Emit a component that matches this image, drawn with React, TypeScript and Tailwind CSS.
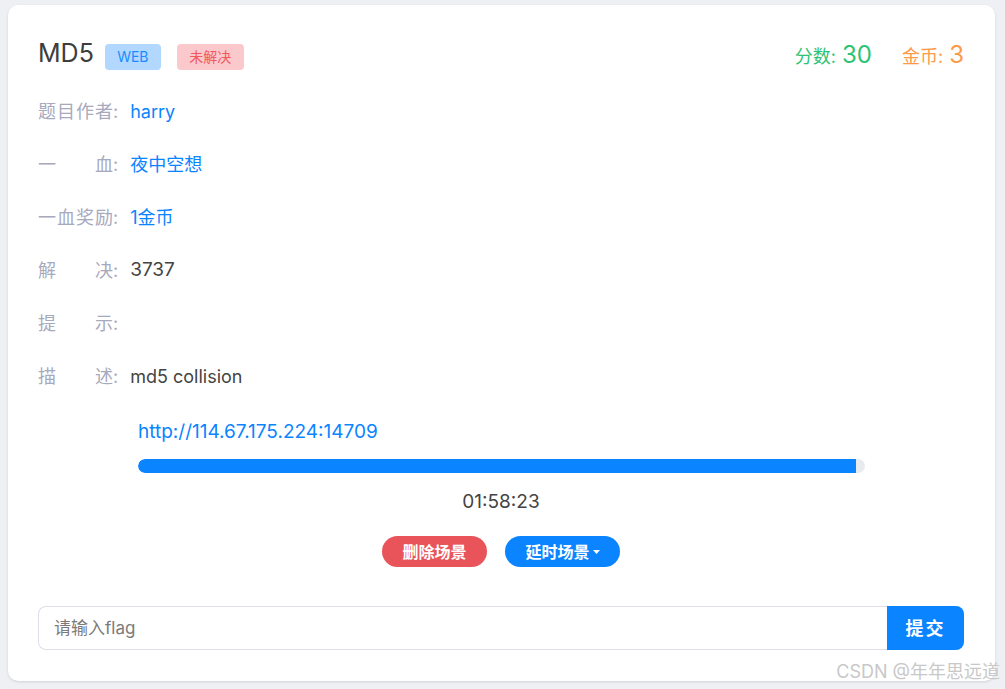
const font = { fontFamily: 'Inter, "Noto Sans CJK SC", sans-serif' };

function Row({ label, children }: { label: string; children?: React.ReactNode }) {
    return (
        <div className="flex h-[53px] items-center text-[18px]">
            <span className="flex text-[#a7a9bd]">
                <span className="w-[75px] text-justify [text-align-last:justify]">{label}</span>
                <span>:</span>
            </span>
            <span className="ml-[12px]">{children}</span>
        </div>
    );
}

export default function App() {
    return (
        <div className="min-h-[689px] bg-[#eef0f3] pl-[8px] pr-[10px] pt-[5px] pb-[8px]" style={font}>
            <div className="relative rounded-[10px] bg-white pl-[30px] pr-[31px] pt-[30px] pb-[31px] shadow-sm">
                {/* Header */}
                <div className="flex h-[36px] items-center justify-between">
                    <div className="flex items-center">
                        <h1 className="text-[25px] leading-none text-[#3d3d3d]">MD5</h1>
                        <span className="ml-[11px] mt-[7px] flex h-[26px] w-[56px] items-center justify-center rounded-[4px] bg-[#b3d8ff] text-[14px] text-[#1a8cff]">WEB</span>
                        <span className="ml-[16px] mt-[7px] flex h-[26px] w-[67px] items-center justify-center rounded-[4px] bg-[#fbc9cb] text-[14px] text-[#f05a5f]">未解决</span>
                    </div>
                    <div className="mt-[4px] flex items-baseline">
                        <span className="text-[18px] text-[#2ec374]">分数:</span>
                        <span className="ml-[6px] text-[24px] text-[#2ec374]">30</span>
                        <span className="ml-[30px] text-[18px] text-[#fc9a4a]">金币:</span>
                        <span className="ml-[6px] text-[24px] text-[#fc9a4a]">3</span>
                    </div>
                </div>

                {/* Info rows */}
                <div className="mt-[14px] flex flex-col">
                    <Row label="题目作者"><span className="text-[#0a84ff]">harry</span></Row>
                    <Row label="一血"><span className="text-[#0a84ff]">夜中空想</span></Row>
                    <Row label="一血奖励"><span className="text-[#0a84ff]">1金币</span></Row>
                    <Row label="解决"><span className="text-[19px] text-[#444]">3737</span></Row>
                    <Row label="提示" />
                    <Row label="描述"><span className="text-[#444]">md5 collision</span></Row>
                </div>

                {/* Scene */}
                <div className="ml-[100px] w-[727px]">
                    <div className="mt-[17px] text-[19px] leading-[24px] text-[#0a84ff]">http://114.67.175.224:14709</div>
                    <div className="mt-[15px] h-[14px] w-full overflow-hidden rounded-full bg-[#e9ecef]">
                        <div className="h-full w-[98.8%] rounded-l-full bg-[#0a84ff]" />
                    </div>
                </div>
                <div className="mt-[17px] text-center text-[19px] leading-[24px] text-[#444]">01:58:23</div>
                <div className="mt-[22px] flex justify-center gap-[18px]">
                    <button className="flex h-[31px] w-[105px] items-center justify-center rounded-full bg-[#e9545a] text-[16px] font-bold text-white">删除场景</button>
                    <button className="flex h-[31px] w-[115px] items-center justify-center rounded-full bg-[#0a84ff] text-[16px] font-bold text-white">
                        延时场景
                        <svg width="7" height="4" viewBox="0 0 7 4" className="ml-[3px]">
                            <path d="M0 0 L7 0 L3.5 4 Z" fill="white" />
                        </svg>
                    </button>
                </div>

                {/* Flag input */}
                <div className="mt-[39px] flex h-[44px]">
                    <input
                        placeholder="请输入flag"
                        className="h-full flex-1 rounded-l-[8px] border border-r-0 border-[#dcdfe6] px-[15px] text-[17px] text-[#444] placeholder:text-[#7a7a7a] focus:outline-none"
                    />
                    <button className="h-full w-[77px] rounded-r-[8px] bg-[#0a84ff] text-[18px] font-bold tracking-[2px] text-white">提交</button>
                </div>

                <span className="absolute right-[-5px] bottom-[-4px] text-[18px] text-[#c8c8c8]">CSDN @年年思远道</span>
            </div>
        </div>
    );
}
